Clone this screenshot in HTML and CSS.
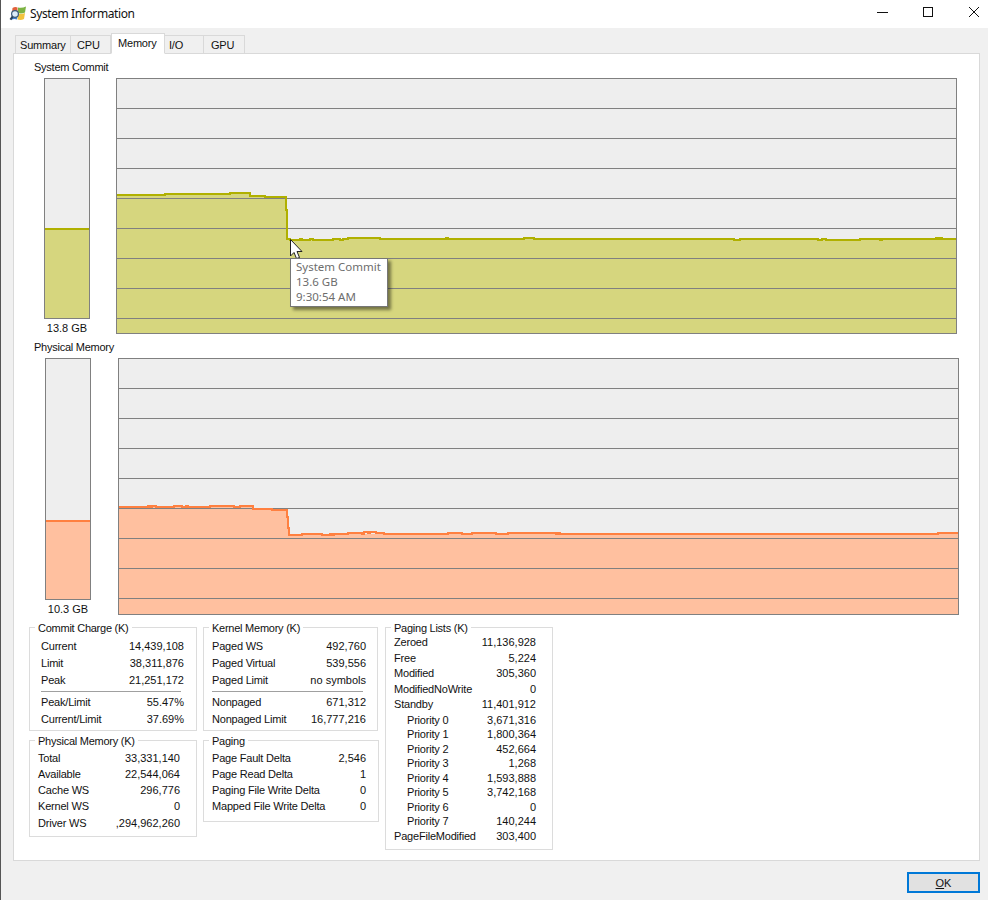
FILE: index.html
```html
<!DOCTYPE html>
<html lang="en">
<head>
<meta charset="utf-8">
<title>System Information</title>
<link rel="stylesheet" href="styles.css">
</head>
<body>
<div class="window">
  <header class="titlebar">
    <svg class="app-icon" width="18" height="18" viewBox="0 0 18 18">
      <path d="M9 2.5 Q13 3.5 17 1.5 L16 7.5 Q12.5 9 9 8 Z" fill="#7cb342"/>
      <path d="M3.5 3 Q6 1.5 8.5 2.5 L8.5 8 Q6 7 3 8.5 Z" fill="#e2603a"/>
      <path d="M9 8.5 Q12.5 9.5 16 8 L15 14 Q12 15.5 8.5 14.5 Z" fill="#f2c33d"/>
      <path d="M3 9 Q5.5 7.5 8.5 8.5 L8 14.5 Q5 13.5 2 15 Z" fill="#3f7fd0"/>
      <circle cx="6" cy="9" r="3.4" fill="#dcecf8" stroke="#3c5a78" stroke-width="1.2"/>
      <path d="M3.6 11.6 L1.4 14.6" stroke="#2c4258" stroke-width="2" fill="none"/>
    </svg>
    <span class="title">System Information</span>
    <div class="caption">
      <svg class="cap-btn" width="46" height="16" viewBox="0 0 46 16"><path d="M18 6.5H29" stroke="#111" fill="none" shape-rendering="crispEdges"/></svg>
      <svg class="cap-btn" width="46" height="16" viewBox="0 0 46 16"><path d="M18.5 1.5H27.5V10.5H18.5Z" stroke="#111" fill="none" shape-rendering="crispEdges"/></svg>
      <svg class="cap-btn" width="37" height="16" viewBox="0 0 37 16"><path d="M18 1L28 11M28 1L18 11" stroke="#111" fill="none"/></svg>
    </div>
  </header>
  <nav class="tabs">
    <span class="tab tab-summary">Summary</span>
    <span class="tab tab-cpu">CPU</span>
    <span class="tab tab-active">Memory</span>
    <span class="tab tab-io">I/O</span>
    <span class="tab tab-gpu">GPU</span>
  </nav>
  <main class="panel">
    <section class="meter">
      <div class="meter-title">System Commit</div>
      <div class="meter-row">
        <div class="bar-col">
          <div class="bar"><div class="bar-fill bar-fill-commit"></div></div>
          <div class="bar-label">13.8 GB</div>
        </div>
        <svg class="graph" width="841" height="256" viewBox="116 78 841 256">
          <rect class="graph-bg" x="116" y="78" width="841" height="256"/>
          <path class="fill-commit" d="M117 195H165V194H230V193H250V196H265V197H285V210H286V239H300V239H957V334H117Z"/>
          <path class="grid" d="M116 108.5H957M116 138.5H957M116 168.5H957M116 198.5H957M116 228.5H957M116 258.5H957M116 288.5H957M116 318.5H957"/>
          <path class="line-commit" d="M117 195H165V194H230V193H250V196H265V197H285.5V210H286.5V239H290V240H300V239H302V240H310V239H313V240H333V239H340V240H343V239H348V238H380V239H446V238H448V239H524V238H534V239H734V240H740V239H818V240H822V239H826V240H860V239H880V240H882V239H936V238H938V239H940V238H942V239H957"/>
          <rect class="frame" x="116.5" y="78.5" width="840" height="255"/>
        </svg>
      </div>
    </section>
    <section class="meter meter-physical">
      <div class="meter-title">Physical Memory</div>
      <div class="meter-row">
        <div class="bar-col bar-col-physical">
          <div class="bar bar-tall"><div class="bar-fill bar-fill-physical"></div></div>
          <div class="bar-label">10.3 GB</div>
        </div>
        <svg class="graph" width="841" height="257" viewBox="118 358 841 257">
          <rect class="graph-bg" x="118" y="358" width="841" height="257"/>
          <path class="fill-physical" d="M119 507H210V506H253V509H272V510H286V517H287V528H288V535H302V534H959V615H119Z"/>
          <path class="grid" d="M118 388.5H959M118 418.5H959M118 448.5H959M118 478.5H959M118 508.5H959M118 538.5H959M118 568.5H959M118 598.5H959"/>
          <path class="line-physical" d="M119 507H148V506H150V507H152V506H156V507H174V506H182V507H186V506H188V507H210V506H234V507H240V506H253V509H272V510H286.5V517H287.5V528H288.5V535H302V534H322V535H330V534H332V535H334V534H348V533H362V534H364V532H368V533H370V532H376V533H384V534H448V533H462V534H472V533H496V534H508V533H556V534H558V533H560V534H938V533H958"/>
          <rect class="frame" x="118.5" y="358.5" width="840" height="256"/>
        </svg>
      </div>
    </section>
    <div class="groups">
      <div class="group-col group-col-1">
        <fieldset class="group group-commit">
          <legend>Commit Charge (K)</legend>
          <div class="row row-17"><span>Current</span><span>14,439,108</span></div>
          <div class="row row-17"><span>Limit</span><span>38,311,876</span></div>
          <div class="row row-17"><span>Peak</span><span>21,251,172</span></div>
          <hr class="sep">
          <div class="row row-17"><span>Peak/Limit</span><span>55.47%</span></div>
          <div class="row row-17"><span>Current/Limit</span><span>37.69%</span></div>
        </fieldset>
        <fieldset class="group group-physical">
          <legend>Physical Memory (K)</legend>
          <div class="row row-16"><span>Total</span><span>33,331,140</span></div>
          <div class="row row-16"><span>Available</span><span>22,544,064</span></div>
          <div class="row row-16"><span>Cache WS</span><span>296,776</span></div>
          <div class="row row-16"><span>Kernel WS</span><span>0</span></div>
          <div class="row row-17 row-last"><span>Driver WS</span><span>,294,962,260</span></div>
        </fieldset>
      </div>
      <div class="group-col group-col-2">
        <fieldset class="group group-kernel">
          <legend>Kernel Memory (K)</legend>
          <div class="row row-17"><span>Paged WS</span><span>492,760</span></div>
          <div class="row row-17"><span>Paged Virtual</span><span>539,556</span></div>
          <div class="row row-17"><span>Paged Limit</span><span>no symbols</span></div>
          <hr class="sep">
          <div class="row row-17"><span>Nonpaged</span><span>671,312</span></div>
          <div class="row row-17"><span>Nonpaged Limit</span><span>16,777,216</span></div>
        </fieldset>
        <fieldset class="group group-paging">
          <legend>Paging</legend>
          <div class="row row-16"><span>Page Fault Delta</span><span>2,546</span></div>
          <div class="row row-16"><span>Page Read Delta</span><span>1</span></div>
          <div class="row row-16"><span>Paging File Write Delta</span><span>0</span></div>
          <div class="row row-16"><span>Mapped File Write Delta</span><span>0</span></div>
        </fieldset>
      </div>
      <fieldset class="group group-lists">
        <legend>Paging Lists (K)</legend>
        <div class="row row-lists"><span>Zeroed</span><span>11,136,928</span></div>
        <div class="row row-lists"><span>Free</span><span>5,224</span></div>
        <div class="row row-lists"><span>Modified</span><span>305,360</span></div>
        <div class="row row-lists"><span>ModifiedNoWrite</span><span>0</span></div>
        <div class="row row-lists"><span>Standby</span><span>11,401,912</span></div>
        <div class="row row-sub"><span>Priority 0</span><span>3,671,316</span></div>
        <div class="row row-sub"><span>Priority 1</span><span>1,800,364</span></div>
        <div class="row row-sub"><span>Priority 2</span><span>452,664</span></div>
        <div class="row row-sub"><span>Priority 3</span><span>1,268</span></div>
        <div class="row row-sub"><span>Priority 4</span><span>1,593,888</span></div>
        <div class="row row-sub"><span>Priority 5</span><span>3,742,168</span></div>
        <div class="row row-sub"><span>Priority 6</span><span>0</span></div>
        <div class="row row-sub"><span>Priority 7</span><span>140,244</span></div>
        <div class="row row-lists"><span>PageFileModified</span><span>303,400</span></div>
      </fieldset>
    </div>
  </main>
  <footer class="footer"><button class="ok"><span class="mnemonic">O</span>K</button></footer>
  <svg class="cursor" width="14" height="22" viewBox="0 0 14 22">
    <path d="M0.5 0.5V17L4 13.5L6.5 19.5L9.5 18.5L7 12.5H12Z" fill="#fff" stroke="#222" stroke-width="1"/>
  </svg>
  <div class="tooltip">
    <div>System Commit</div>
    <div>13.6 GB</div>
    <div>9:30:54 AM</div>
  </div>
</div>
</body>
</html>
```

FILE: styles.css
```css
* { box-sizing: border-box; }
html, body { margin: 0; padding: 0; }
body {
  font-family: "Liberation Sans", "Noto Sans", sans-serif;
  font-size: 11px;
  color: #111;
  background: #f0f0f0;
}
.window {
  position: relative;
  width: 988px;
  height: 900px;
  overflow: hidden;
  background: #f0f0f0;
  border-left: 1px solid #555;
}
.titlebar {
  display: flex;
  align-items: center;
  height: 28px;
  background: #fff;
  padding-left: 8px;
}
.app-icon { margin-right: 3px; }
.title {
  font-family: "Noto Sans", sans-serif;
  font-size: 12px;
  letter-spacing: -0.4px;
  color: #111;
  margin-bottom: 2px;
}
.caption { display: flex; margin-left: auto; }
.cap-btn { display: block; }
.tabs {
  display: flex;
  align-items: flex-end;
  height: 26px;
  padding-left: 14px;
  margin-bottom: -1px;
  position: relative;
  z-index: 1;
}
.tab {
  height: 19px;
  padding: 2px 0 0 4px;
  border: 1px solid #d9d9d9;
  border-left: 0;
  background: #f0f0f0;
  line-height: 15px;
  letter-spacing: -0.2px;
}
.tab-summary { width: 56px; border-left: 1px solid #d9d9d9; }
.tab-cpu { width: 40px; padding-left: 6px; }
.tab-active {
  width: 54px;
  height: 21px;
  background: #fff;
  border-left: 1px solid #d9d9d9;
  border-bottom-color: #fff;
  padding-left: 6px;
}
.tab-io { width: 39px; padding-left: 4px; }
.tab-gpu { width: 41px; padding-left: 7px; }
.panel {
  width: 967px;
  height: 808px;
  margin-left: 12px;
  background: #fff;
  border: 1px solid #d9d9d9;
  padding-top: 6px;
}
.meter { display: flex; flex-direction: column; }
.meter-physical { margin-top: 5px; }
.meter-title {
  height: 14px;
  line-height: 14px;
  margin-left: 20px;
  margin-bottom: 4px;
  letter-spacing: -0.25px;
}
.meter-row { display: flex; align-items: flex-start; }
.bar-col { width: 46px; margin-left: 30px; margin-right: 26px; }
.bar-col-physical { margin-left: 31px; margin-right: 27px; }
.bar {
  display: flex;
  align-items: flex-end;
  width: 46px;
  height: 241px;
  background: #eee;
  border: 1px solid #808080;
}
.bar-tall { height: 242px; }
.bar-fill { width: 100%; }
.bar-fill-commit { height: 90px; background: #d6d67e; border-top: 2px solid #b0b000; }
.bar-fill-physical { height: 79px; background: #ffc09f; border-top: 2px solid #ff8040; }
.bar-label { text-align: center; line-height: 14px; margin-top: 2px; }
.graph { display: block; flex: none; }
.graph-bg { fill: #eee; }
.fill-commit { fill: #d6d67e; shape-rendering: crispEdges; }
.fill-physical { fill: #ffc09f; shape-rendering: crispEdges; }
.grid { stroke: #808080; fill: none; shape-rendering: crispEdges; }
.frame { stroke: #808080; fill: none; shape-rendering: crispEdges; }
.line-commit { stroke: #b0b000; stroke-width: 2; fill: none; shape-rendering: crispEdges; }
.line-physical { stroke: #ff8040; stroke-width: 2; fill: none; shape-rendering: crispEdges; }
.groups {
  display: flex;
  align-items: flex-start;
  margin-top: 4px;
  margin-left: 15px;
  gap: 6px;
}
.group-col { display: flex; flex-direction: column; gap: 2px; }
.group {
  margin: 0;
  min-width: 0;
  border: 1px solid #dcdcdc;
  display: block;
}
.group legend {
  padding: 0 3px;
  margin-left: -3px;
  line-height: 16px;
  height: 14px;
  letter-spacing: -0.25px;
}
.group-col-1 { width: 168px; }
.group-col-2 { width: 176px; }
.group-commit { width: 168px; height: 111px; padding: 4px 12px 0 11px; }
.group-commit legend { margin-left: -6px; }
.group-physical { width: 168px; height: 104px; padding: 3px 16px 0 8px; }
.group-kernel { width: 175px; height: 111px; padding: 4px 11px 0 8px; }
.group-paging { width: 176px; height: 89px; padding: 3px 12px 0 8px; }
.group-lists { width: 168px; height: 230px; padding: 1px 16px 0 8px; }
.row { display: flex; justify-content: space-between; white-space: nowrap; }
.row span:first-child { letter-spacing: -0.2px; }
.row-17 { height: 17px; line-height: 17px; }
.row-16 { height: 16px; line-height: 16px; }
.row-last { margin-top: 1px; }
.row-lists { height: 15.6px; line-height: 15.6px; }
.row-sub { height: 14.5px; line-height: 14.5px; padding-left: 13px; }
.sep { border: 0; border-top: 1px solid #a0a0a0; margin: 2px 3px 2px 0; height: 0; }
.footer {
  display: flex;
  justify-content: flex-end;
  padding: 11px 8px 0 0;
}
.ok {
  width: 73px;
  height: 21px;
  padding: 0;
  font: inherit;
  color: #111;
  background: #e1e1e1;
  border: 2px solid #0078d7;
  line-height: 16px;
}
.mnemonic { text-decoration: underline; }
.cursor { position: absolute; left: 289px; top: 239px; }
.tooltip {
  position: absolute;
  left: 289px;
  top: 258px;
  width: 98px;
  height: 49px;
  padding: 0 0 0 5px;
  font-family: "Noto Sans", sans-serif;
  font-size: 11.5px;
  line-height: 15px;
  color: #6d6d6d;
  background: #fff;
  border: 1px solid #767676;
  box-shadow: 3px 3px 3px rgba(0, 0, 0, .45);
}
```
